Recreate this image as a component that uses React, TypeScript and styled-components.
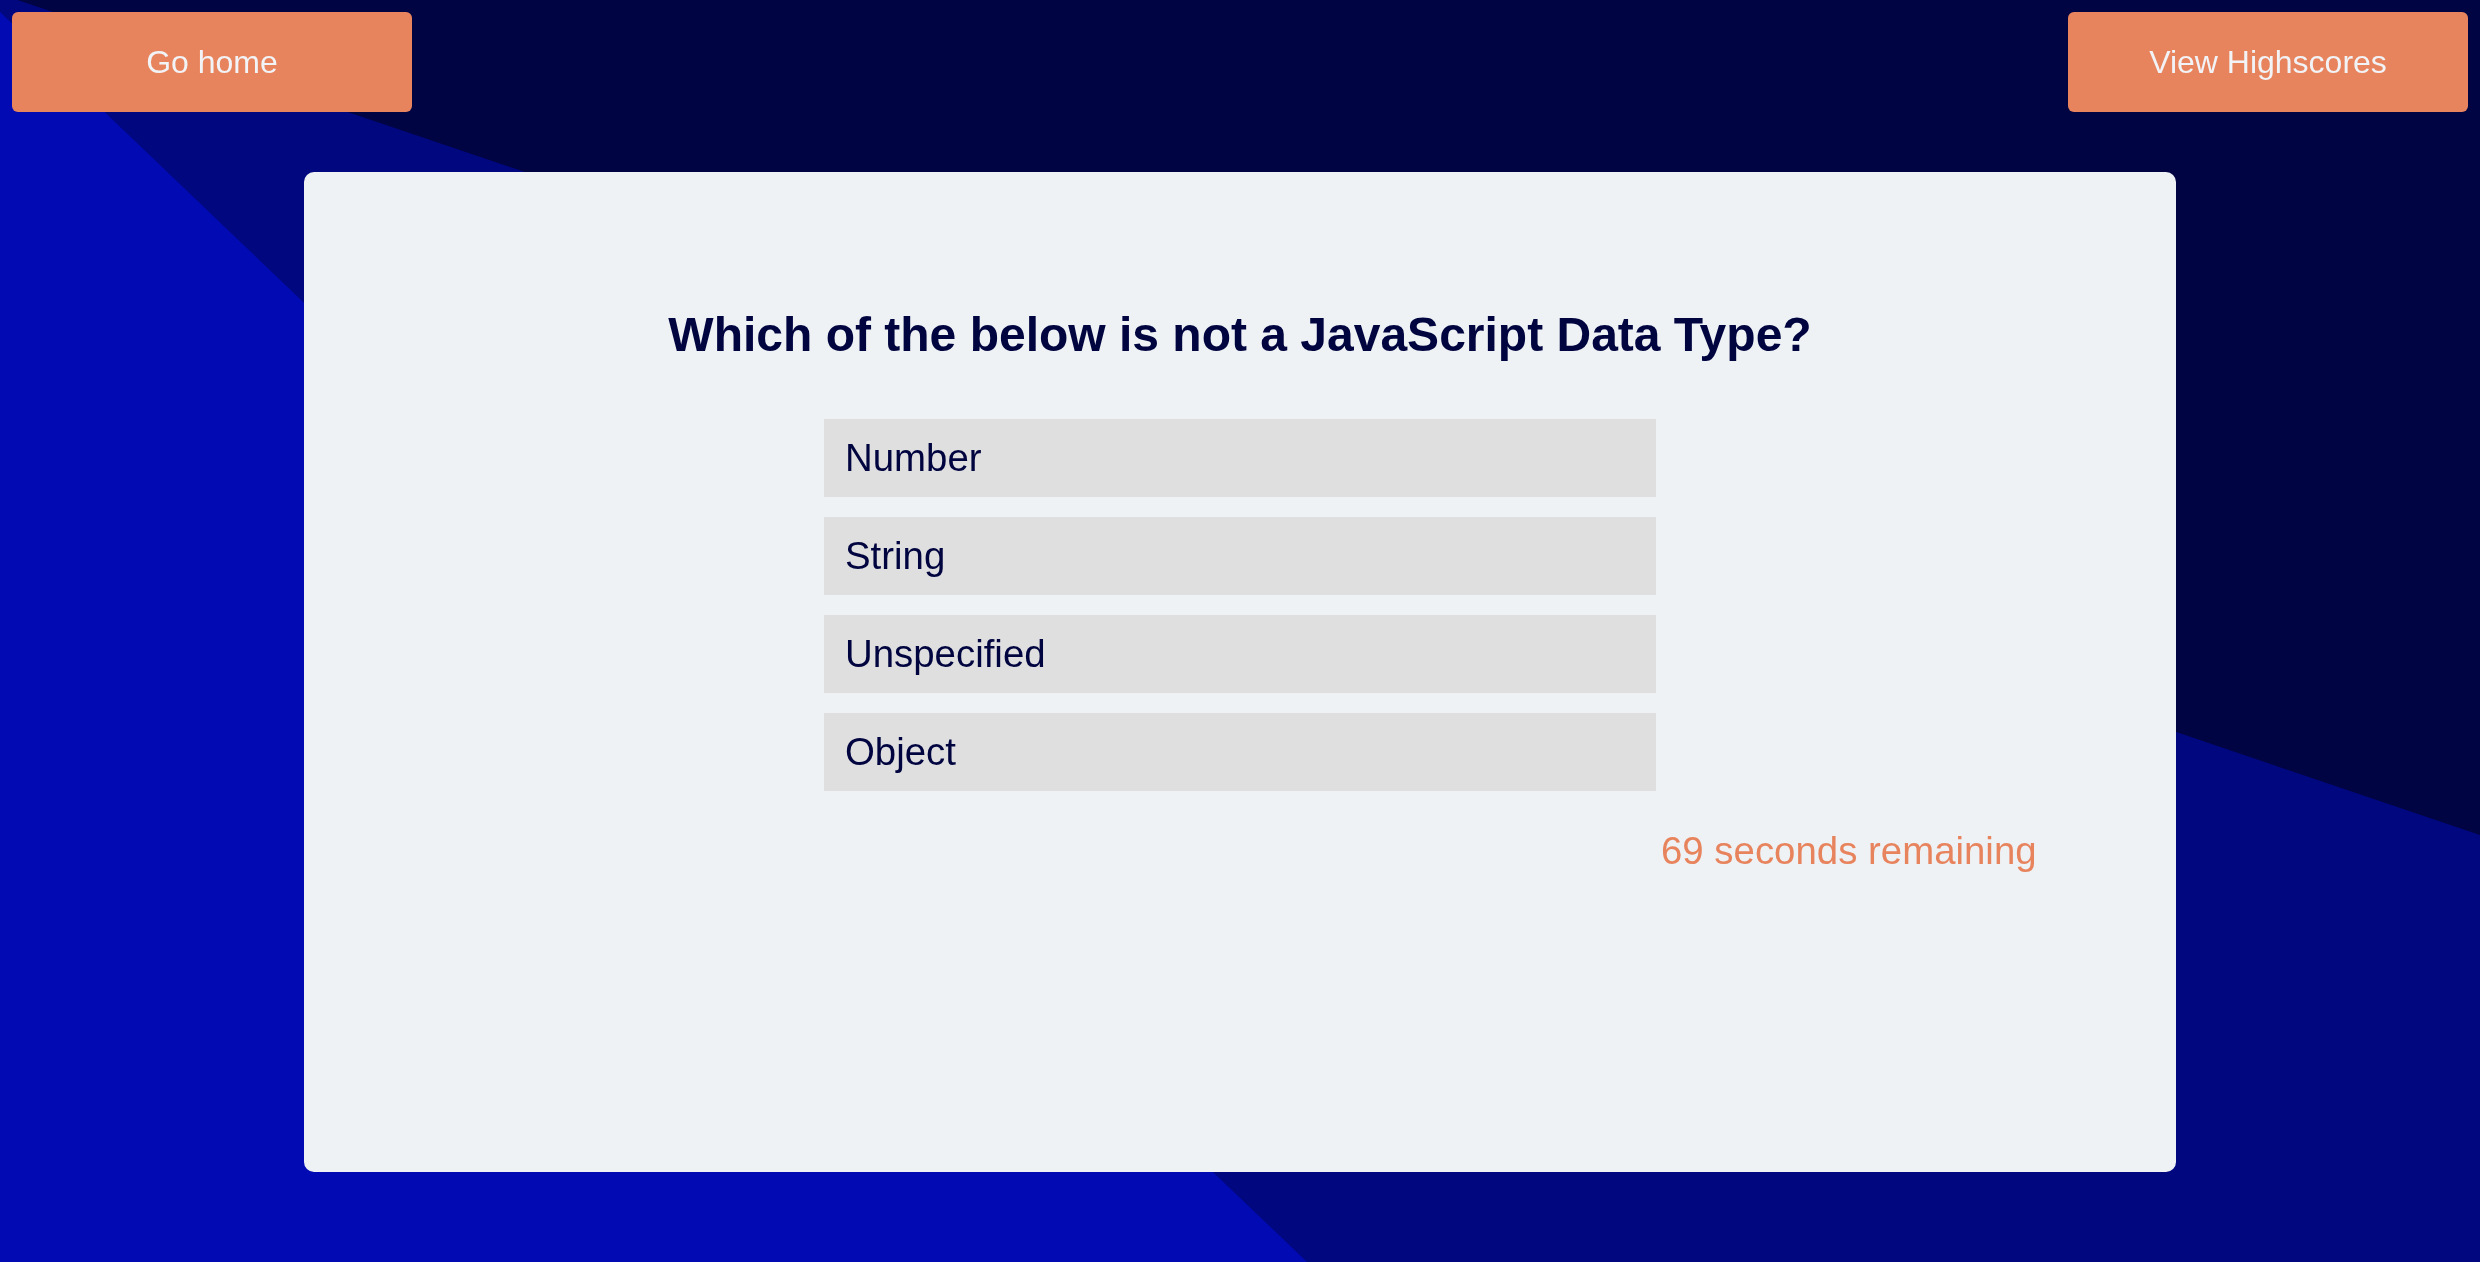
import { createGlobalStyle } from "styled-components";
import styled from "styled-components";

const GlobalStyle = createGlobalStyle`
  html, body {
    margin: 0;
    height: 100%;
    overflow: hidden;
  }

  body {
    font-family: "Liberation Sans", Arial, Helvetica, sans-serif;
    background: #01077e;
  }

  * {
    box-sizing: border-box;
  }
`;

const Backdrop = styled.svg`
  position: fixed;
  inset: 0;
  width: 100%;
  height: 100%;
  z-index: 0;
`;

const Page = styled.div`
  position: relative;
  z-index: 1;
  min-height: 100vh;
  display: flex;
  flex-direction: column;
  align-items: center;
`;

const Header = styled.header`
  display: flex;
  justify-content: space-between;
  align-items: center;
  width: 100%;
  padding: 12px;
`;

const NavButton = styled.button`
  width: 400px;
  height: 100px;
  border: none;
  border-radius: 6px;
  background: #e8845d;
  color: #f1f3f6;
  font-family: inherit;
  font-size: 32px;
  cursor: pointer;
`;

const Card = styled.main`
  width: 1872px;
  height: 1000px;
  margin-top: 48px;
  padding-top: 135px;
  border-radius: 10px;
  background: #eef2f5;
  display: flex;
  flex-direction: column;
  align-items: center;
`;

const Question = styled.h1`
  margin: 0;
  font-size: 48px;
  font-weight: 700;
  line-height: normal;
  color: #00043f;
`;

const Board = styled.div`
  display: grid;
  grid-template-columns: 1fr 832px 1fr;
  width: 100%;
  margin-top: 57px;
`;

const Choices = styled.ol`
  grid-column: 2;
  grid-row: 1;
  list-style: none;
  margin: 0;
  padding: 0;
  display: flex;
  flex-direction: column;
  gap: 20px;
`;

const Choice = styled.li`
  height: 78px;
  display: flex;
  align-items: center;
  padding-left: 21px;
  background: #e0dfe0;
  color: #00043f;
  font-size: 38.4px;
  cursor: pointer;
`;

const Timer = styled.p`
  grid-column: 3;
  grid-row: 2;
  margin: 38px 0 0 5px;
  font-size: 38.4px;
  line-height: normal;
  color: #e8845d;
`;

const choices = ["Number", "String", "Unspecified", "Object"];

const App = () => {
  return (
    <>
      <GlobalStyle />
      <Backdrop viewBox="0 0 2480 1262" preserveAspectRatio="none" aria-hidden>
        <rect width="2480" height="1262" fill="#01077e" />
        <polygon points="17.6,0 2480,0 2480,835" fill="#000442" />
        <polygon points="0,12 1307,1262 0,1262" fill="#020bb3" />
      </Backdrop>
      <Page>
        <Header>
          <NavButton>Go home</NavButton>
          <NavButton>View Highscores</NavButton>
        </Header>
        <Card>
          <Question>Which of the below is not a JavaScript Data Type?</Question>
          <Board>
            <Choices>
              {choices.map((c) => (
                <Choice key={c}>{c}</Choice>
              ))}
            </Choices>
            <Timer>69 seconds remaining</Timer>
          </Board>
        </Card>
      </Page>
    </>
  );
};

export default App;
